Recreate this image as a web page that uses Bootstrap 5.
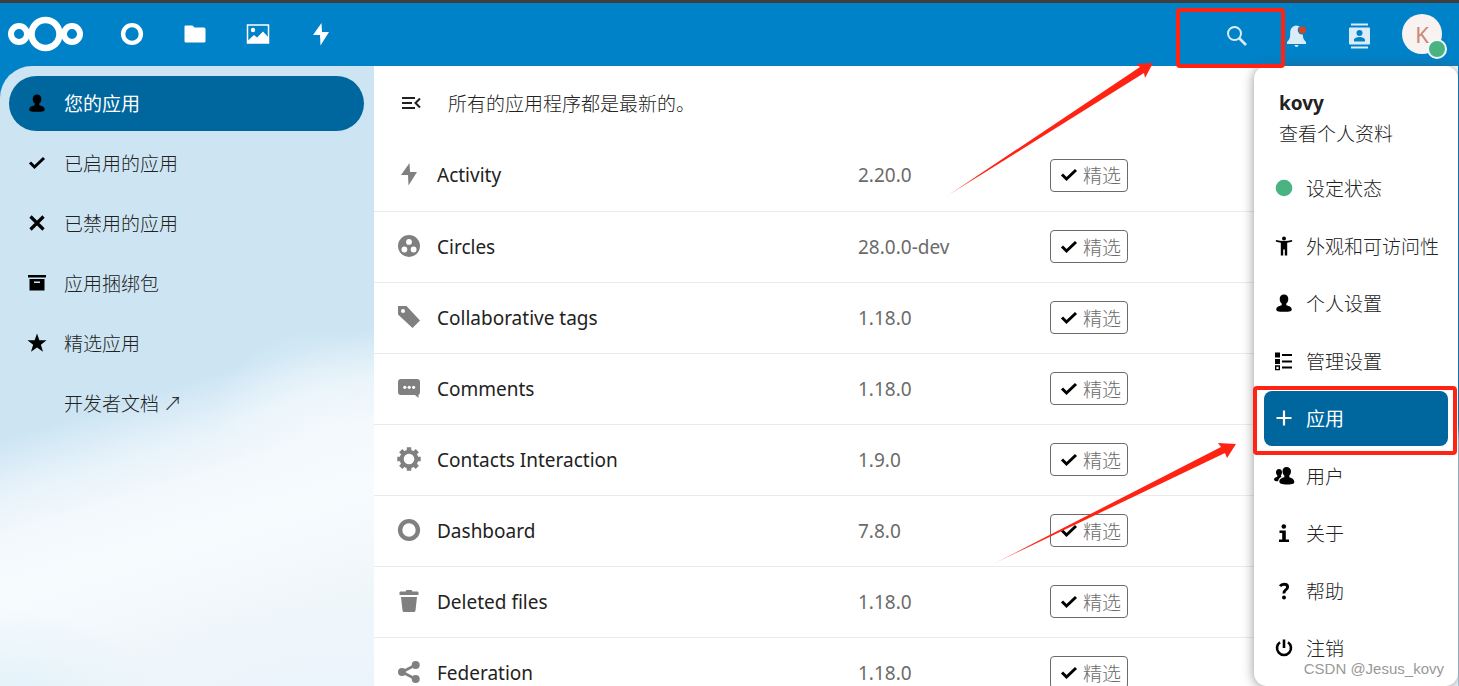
<!DOCTYPE html>
<html lang="zh-CN">
<head>
<meta charset="utf-8">
<meta name="viewport" content="width=device-width, initial-scale=1">
<title>应用 - Nextcloud</title>
<link href="https://cdn.jsdelivr.net/npm/bootstrap@5.3.0/dist/css/bootstrap.min.css" rel="stylesheet">
<style>
  :root { --nc-blue: #0082c9; --nc-dark: #00679e; --nc-red: #ff2314; --nc-green: #49b382; }
  body {
    font-family: "Noto Sans", "Noto Sans CJK SC", sans-serif;
    font-size: 19px; line-height: 30px; color: #222;
    background: linear-gradient(var(--nc-blue) 62%, #a9d2ea 64%);
    border-top: 3px solid #3d3d3d;
  }
  .cjk { font-family: "Noto Sans CJK SC", sans-serif; font-weight: 300; }
  .topbar { height: 63px; padding: 0 6px 1px 8px; }
  .app-links { gap: 39px; margin-left: 36px; }
  .top-btn { width: 62px; height: 60px; padding: 0; border: 0; background: none; color: #d9ecf7; }
  .avatar { width: 40px; height: 40px; background: #f8f2f1; color: #cc8678; font-size: 22px; }
  .avatar-dot { right: -5px; bottom: -5px; width: 20px; height: 20px; border: 2px solid #f4f9fc; background: var(--nc-green); }
  .side {
    width: 374px; padding: 10px 10px 0 9px; gap: 5px; border-top-left-radius: 32px;
    background:
      radial-gradient(ellipse 170px 100px at 0 104%, #e1f1f9, transparent),
      radial-gradient(ellipse 260px 110px at 90% 104%, #ebf3fc, transparent),
      radial-gradient(ellipse 110px 90px at 86% 57%, rgba(245,250,253,.6), transparent),
      linear-gradient(163deg, #cde5f3 51%, #e6f2fa 58%, #f2f8fc 64%, #f6fbfe 72%, #eff6fa 88%);
  }
  .side a { height: 55px; padding: 0 0 2px 16px; gap: 15px; border-radius: 28px; color: #222; }
  .side a.active { background: var(--nc-dark); color: #fff; font-weight: 400; }
  .content { margin-right: 1px; }
  .content-head { height: 74px; padding-left: 25px; gap: 25px; }
  .toggle { border: 0; padding: 0; background: none; line-height: 0; color: #222; }
  .apps { table-layout: fixed; }
  .apps td { height: 71px; padding: 0; border-bottom: 1px solid #ebebeb; vertical-align: middle; }
  .apps td:first-child { padding-left: 23px; padding-bottom: 2px; line-height: 0; color: #808080; }
  .col-ico { width: 63px; } .col-app { width: 421px; } .col-ver { width: 192px; }
  .ver { color: #6b6b6b; }
  .tagged { width: 78px; height: 33px; border: 1px solid #6b6b6b; border-radius: 4px; gap: 2px; color: #6b6b6b; }
  .user-menu {
    top: 63px; right: 1px; bottom: 0; width: 204px; padding: 7px 10px 10px;
    background: #fff; border-radius: 13px; box-shadow: 0 1px 12px rgba(77,77,77,.6);
  }
  .profile { height: 85px; padding: 15px 15px 0; color: #222; }
  .profile-name { font-family: "Noto Sans", sans-serif; }
  .user-menu .entry { height: 55px; padding-left: 8px; gap: 10px; border-radius: 8px; color: #222; }
  .user-menu .entry.active { background: var(--nc-dark); color: #fff; font-weight: 400; }
  .entry svg, .side svg { color: #000; flex: none; }
  .entry.active svg { color: #fff; }
  .frame { border: 4px solid var(--nc-red); border-radius: 4px; pointer-events: none; }
  .frame-search { right: 174px; top: 5px; width: 109px; height: 60px; z-index: 5; }
  .frame-apps { inset: -5px -9px -9px -11px; }
  .arrows { right: 220px; top: 58px; z-index: 4; pointer-events: none; }
  .watermark { right: 15px; bottom: 5px; z-index: 6; font: 15px/24px "Liberation Sans", sans-serif; color: #999; }
</style>
</head>
<body class="vh-100 overflow-hidden">
<svg class="d-none">
  <symbol id="bolt" viewBox="0 0 24 24"><path fill="currentColor" d="M12.500 1 4 13h7L11.500 23.500 20 10h-7z"/></symbol>
  <symbol id="ring" viewBox="0 0 24 24"><circle cx="12" cy="12" r="8.900" fill="none" stroke="currentColor" stroke-width="4.400"/></symbol>
  <symbol id="check" viewBox="0 0 24 24"><path d="m5 11.500 4.500 4.500L19 7" fill="none" stroke="currentColor" stroke-width="3"/></symbol>
  <symbol id="person" viewBox="0 0 24 24"><path fill="currentColor" d="M12 3.500c-2.800 0-4.300 2-4.300 4.500 0 2 .8 3.500 2 4.600v1.600c-3 .8-5.400 1.600-5.400 4.200 0 1.600 1.200 2.400 7.700 2.400s7.700-.8 7.700-2.400c0-2.600-2.400-3.400-5.400-4.200v-1.600c1.200-1.100 2-2.600 2-4.600 0-2.500-1.500-4.500-4.300-4.500z"/></symbol>
</svg>
<div class="position-relative d-flex flex-column h-100">
  <header class="topbar d-flex align-items-center flex-shrink-0 text-white">
    <a href="#" class="text-white lh-1 d-flex" aria-label="Nextcloud">
      <svg width="76" height="36" viewBox="0 0 76 36" fill="none" stroke="currentColor" stroke-width="6"><circle cx="11" cy="18" r="8"/><circle cx="37.500" cy="18" r="14" stroke-width="6.500"/><circle cx="64" cy="18" r="8"/></svg>
    </a>
    <nav class="app-links d-flex align-items-center">
      <a href="#" class="text-white d-flex" aria-label="仪表盘"><svg width="24" height="24"><use href="#ring"/></svg></a>
      <a href="#" class="text-white d-flex" aria-label="文件"><svg width="24" height="24" viewBox="0 0 24 24"><path fill="currentColor" d="M2.500 3.500h7l2 2H21q1.500 0 1.500 1.500v12q0 1.500-1.500 1.500H3q-1.500 0-1.500-1.500V4.500q0-1 1-1z"/></svg></a>
      <a href="#" class="text-white d-flex" aria-label="照片"><svg width="24" height="24" viewBox="0 0 24 24"><path fill="none" stroke="currentColor" stroke-width="1.500" d="M1.500 3h21v18h-21z"/><circle cx="7" cy="8" r="2.200" fill="currentColor"/><path fill="currentColor" d="M2 18.500 8 13l3 2.500 6-6 5.500 6V21H2z"/></svg></a>
      <a href="#" class="text-white d-flex" aria-label="动态"><svg width="24" height="24"><use href="#bolt"/></svg></a>
    </nav>
    <div class="d-flex align-items-center ms-auto">
      <button class="top-btn" type="button" aria-label="搜索"><svg width="24" height="24" viewBox="0 0 24 24" fill="none" stroke="currentColor" stroke-width="2"><circle cx="10.500" cy="9.500" r="6.500"/><path d="m15 14 7 7" stroke-width="2.600"/></svg></button>
      <button class="top-btn" type="button" aria-label="通知"><svg width="24" height="24" viewBox="0 0 24 24"><path fill="currentColor" d="M10 1.500c-4.500 1-5.800 4-5.800 7.500 0 5-.6 6.500-3.200 9v2h19v-2c-2.500-2.500-3.200-4-3.200-9V3zM8.500 21h4q-.3 2-2 2t-2-2z"/><circle cx="16.300" cy="6" r="4.600" fill="var(--nc-blue)"/><circle cx="16.300" cy="6" r="3.600" fill="#d9441f"/></svg></button>
      <button class="top-btn" type="button" aria-label="联系人"><svg width="24" height="26" viewBox="0 0 24 26" fill="currentColor"><path d="M3 .5h17v2H3zM3 23.500h17v2H3z"/><path fill-rule="evenodd" d="M2 4.500h19q1 0 1 1v15q0 1-1 1H2q-1 0-1-1v-15q0-1 1-1zM11.500 7a3 3 0 1 0 0 6 3 3 0 0 0 0-6zM6 18.500h11V17c0-2-3-3-5.500-3S6 15 6 17z"/></svg></button>
      <button class="top-btn d-flex align-items-center justify-content-center" type="button" aria-label="设置菜单">
        <span class="avatar position-relative rounded-circle d-flex align-items-center justify-content-center">K<span class="avatar-dot position-absolute rounded-circle"></span></span>
      </button>
    </div>
  </header>

  <div class="d-flex flex-grow-1 overflow-hidden">
    <nav class="side cjk d-flex flex-column flex-shrink-0">
      <a href="#" class="active d-flex align-items-center text-decoration-none"><svg width="24" height="24"><use href="#person"/></svg>您的应用</a>
      <a href="#" class="d-flex align-items-center text-decoration-none"><svg width="24" height="24"><use href="#check"/></svg>已启用的应用</a>
      <a href="#" class="d-flex align-items-center text-decoration-none"><svg width="24" height="24" viewBox="0 0 24 24"><path d="m5.500 5.500 13 13m0-13-13 13" stroke="currentColor" stroke-width="3.200"/></svg>已禁用的应用</a>
      <a href="#" class="d-flex align-items-center text-decoration-none"><svg width="24" height="24" viewBox="0 0 24 24"><path fill="currentColor" fill-rule="evenodd" d="M3 4h18v2.500H3zM4.500 8h15v11.500h-15zM9 10.500V12h6v-1.500z"/></svg>应用捆绑包</a>
      <a href="#" class="d-flex align-items-center text-decoration-none"><svg width="24" height="24" viewBox="0 0 24 24"><path fill="currentColor" d="m12 2.500 2.400 6.800H21.500l-5.600 4.400 2.100 7L12 16.600l-6 4.100 2.100-7L2.500 9.300h7.100z"/></svg>精选应用</a>
      <a href="#" class="d-flex align-items-center text-decoration-none"><svg width="24" height="24"></svg><span>开发者文档 ↗</span></a>
    </nav>

    <main class="content flex-grow-1 bg-white overflow-hidden">
      <div class="content-head cjk d-flex align-items-center">
        <button class="toggle" type="button" aria-label="关闭导航"><svg width="24" height="24" viewBox="0 0 24 24" fill="none" stroke="currentColor" stroke-width="2"><path d="M3 7h13M3 12h10M3 17h13M21 7.500 16.500 12l4.500 4.500"/></svg></button>
        所有的应用程序都是最新的。
      </div>
      <table class="apps w-100">
        <colgroup><col class="col-ico"><col class="col-app"><col class="col-ver"><col></colgroup>
        <tbody>
          <tr><td><svg width="24" height="24"><use href="#bolt"/></svg></td><td>Activity</td><td class="ver">2.20.0</td><td><span class="tagged cjk d-flex align-items-center justify-content-center"><svg width="24" height="24" color="#000"><use href="#check"/></svg>精选</span></td></tr>
          <tr><td><svg width="24" height="24" viewBox="0 0 24 24"><path fill="currentColor" fill-rule="evenodd" d="M12 1a11 11 0 1 0 0 22 11 11 0 0 0 0-22zm0 4a2.900 2.900 0 1 1 0 5.800A2.900 2.900 0 0 1 12 5zm-4.600 7.600a2.900 2.900 0 1 1 0 5.800 2.900 2.900 0 0 1 0-5.800zm9.200 0a2.900 2.900 0 1 1 0 5.800 2.900 2.900 0 0 1 0-5.800z"/></svg></td><td>Circles</td><td class="ver">28.0.0-dev</td><td><span class="tagged cjk d-flex align-items-center justify-content-center"><svg width="24" height="24" color="#000"><use href="#check"/></svg>精选</span></td></tr>
          <tr><td><svg width="24" height="24" viewBox="0 0 24 24"><path fill="currentColor" fill-rule="evenodd" d="M1 1h8.500L23 15.500 15.500 23 1 9.500zm5 3a2 2 0 1 0 0 4 2 2 0 0 0 0-4z"/></svg></td><td>Collaborative tags</td><td class="ver">1.18.0</td><td><span class="tagged cjk d-flex align-items-center justify-content-center"><svg width="24" height="24" color="#000"><use href="#check"/></svg>精选</span></td></tr>
          <tr><td><svg width="24" height="24" viewBox="0 0 24 24"><path fill="currentColor" d="M4 3h16q3 0 3 3v10q0 2.500-1.500 3v3l-3.500-3H4q-3 0-3-3V6q0-3 3-3z"/><g fill="#fff"><circle cx="7.800" cy="11.300" r="1.600"/><circle cx="12.200" cy="11.300" r="1.600"/><circle cx="16.600" cy="11.300" r="1.600"/></g></svg></td><td>Comments</td><td class="ver">1.18.0</td><td><span class="tagged cjk d-flex align-items-center justify-content-center"><svg width="24" height="24" color="#000"><use href="#check"/></svg>精选</span></td></tr>
          <tr><td><svg width="24" height="24" viewBox="0 0 24 24" fill="none" stroke="currentColor"><circle cx="12" cy="12" r="7.300" stroke-width="4"/><path stroke-width="4.500" d="M12 .3v4M12 19.700v4M.3 12h4M19.700 12h4M3.700 3.700l3 3M17.300 17.300l3 3M3.700 20.300l3-3M17.300 6.700l3-3"/></svg></td><td>Contacts Interaction</td><td class="ver">1.9.0</td><td><span class="tagged cjk d-flex align-items-center justify-content-center"><svg width="24" height="24" color="#000"><use href="#check"/></svg>精选</span></td></tr>
          <tr><td><svg width="24" height="24"><use href="#ring"/></svg></td><td>Dashboard</td><td class="ver">7.8.0</td><td><span class="tagged cjk d-flex align-items-center justify-content-center"><svg width="24" height="24" color="#000"><use href="#check"/></svg>精选</span></td></tr>
          <tr><td><svg width="24" height="24" viewBox="0 0 24 24"><path fill="currentColor" d="M9.500 1h5l1 1.500h5q1 0 1 1V6h-19V3.500q0-1 1-1h5zM4 8h16l-1.500 13.500q-.3 1.500-1.500 1.500H7q-1.200 0-1.500-1.500z"/></svg></td><td>Deleted files</td><td class="ver">1.18.0</td><td><span class="tagged cjk d-flex align-items-center justify-content-center"><svg width="24" height="24" color="#000"><use href="#check"/></svg>精选</span></td></tr>
          <tr><td><svg width="24" height="24" viewBox="0 0 24 24" fill="currentColor"><path d="M18.500 5 5 12l13.500 7" fill="none" stroke="currentColor" stroke-width="2.600"/><circle cx="18.700" cy="5" r="4"/><circle cx="5" cy="12" r="4"/><circle cx="18.700" cy="19" r="4"/></svg></td><td>Federation</td><td class="ver">1.18.0</td><td><span class="tagged cjk d-flex align-items-center justify-content-center"><svg width="24" height="24" color="#000"><use href="#check"/></svg>精选</span></td></tr>
        </tbody>
      </table>
    </main>
  </div>

  <nav class="user-menu cjk position-absolute d-flex flex-column justify-content-between">
    <a href="#" class="profile d-block text-decoration-none"><strong class="profile-name d-block fw-bold">kovy</strong>查看个人资料</a>
    <a href="#" class="entry d-flex align-items-center text-decoration-none"><svg width="24" height="24" viewBox="0 0 24 24"><circle cx="12" cy="12" r="8.300" fill="var(--nc-green)"/></svg>设定状态</a>
    <a href="#" class="entry d-flex align-items-center text-decoration-none"><svg width="24" height="24" viewBox="0 0 24 24"><circle cx="12" cy="4.500" r="2" fill="currentColor"/><path fill="currentColor" d="M4 6q8 2 16 0l.3 1.600q-2.600.9-5.100 1.200V21.500H12.800V15.500h-1.600v6H8.800V8.800Q6.300 8.500 3.700 7.600z"/></svg>外观和可访问性</a>
    <a href="#" class="entry d-flex align-items-center text-decoration-none"><svg width="24" height="24"><use href="#person"/></svg>个人设置</a>
    <a href="#" class="entry d-flex align-items-center text-decoration-none"><svg width="24" height="24" viewBox="0 0 24 24" fill="currentColor"><path d="M3 3.500h5v5H3zM3 10h5v5H3zM10 5h10v2H10zM10 11.500h10v2H10zM10 17.500h10v2H10z"/><path d="M3.700 17h3.600v3.600H3.700z" fill="none" stroke="currentColor" stroke-width="1.400"/></svg>管理设置</a>
    <a href="#" class="entry active position-relative d-flex align-items-center text-decoration-none"><svg width="24" height="24" viewBox="0 0 24 24"><path d="M12 4.500v15M4.500 12h15" stroke="currentColor" stroke-width="2.200"/></svg>应用<span class="frame frame-apps position-absolute"></span></a>
    <a href="#" class="entry d-flex align-items-center text-decoration-none"><svg width="24" height="24" viewBox="0 0 24 24" fill="currentColor"><path d="M14.500 3c-2.500 0-4 1.800-4 4.300 0 1.900.8 3.200 1.800 4.200v1.700c-2.600.7-5 1.700-5 4 0 2.200 2 3.300 8 3.300s7-1.100 7-2.800c0-2.400-2.400-3.800-5-4.500v-1.700c1-1 1.700-2.300 1.700-4.200 0-2.500-2-4.300-4.500-4.300z"/><path d="M7 5c-1.900 0-3 1.400-3 3.200 0 1.500.6 2.500 1.300 3.200v1.300c-1.800.5-3.300 1.200-3.300 2.800 0 1.300 1.500 1.800 4 1.800.4-2.300 2-3.700 3.300-4.300l-.3-1.800C9.500 10.600 10 9.700 10 8.200 10 6.400 9 5 7 5z"/></svg>用户</a>
    <a href="#" class="entry d-flex align-items-center text-decoration-none"><svg width="24" height="24" viewBox="0 0 24 24" fill="currentColor"><circle cx="11.800" cy="5.500" r="2.300"/><path d="M7.500 9.500h6.300v9H17V21H7v-2.500h3.200V12H7.500z"/></svg>关于</a>
    <a href="#" class="entry d-flex align-items-center text-decoration-none"><svg width="24" height="24" viewBox="0 0 24 24"><path d="M8 7.200q1.500-2 4.200-2 3.400 0 3.400 2.700 0 1.700-1.900 3T12 14.500" fill="none" stroke="currentColor" stroke-width="2.900"/><circle cx="12" cy="18.500" r="2" fill="currentColor"/></svg>帮助</a>
    <a href="#" class="entry d-flex align-items-center text-decoration-none"><svg width="24" height="24" viewBox="0 0 24 24"><path d="M8 6.300a7 7 0 1 0 8 0M12 3.500V12" fill="none" stroke="currentColor" stroke-width="2.600"/></svg>注销</a>
  </nav>

  <span class="frame frame-search position-absolute"></span>
  <svg class="arrows position-absolute" width="300" height="510" viewBox="0 0 300 510">
    <defs>
      <linearGradient id="fade"><stop offset="0" stop-color="#ff2314" stop-opacity=".4"/><stop offset=".15" stop-color="#ff2314"/></linearGradient>
    </defs>
    <path fill="url(#fade)" d="M8 135 L201 6 L197 3 L214 2 L206 17 L205 12 Z"/>
    <path fill="url(#fade)" d="M54 503 L282 386 L279 382 L297 383 L288 397 L286 392 Z"/>
  </svg>
  <div class="watermark position-absolute">CSDN @Jesus_kovy</div>
</div>
<script src="https://cdn.jsdelivr.net/npm/bootstrap@5.3.0/dist/js/bootstrap.bundle.min.js"></script>
</body>
</html>
